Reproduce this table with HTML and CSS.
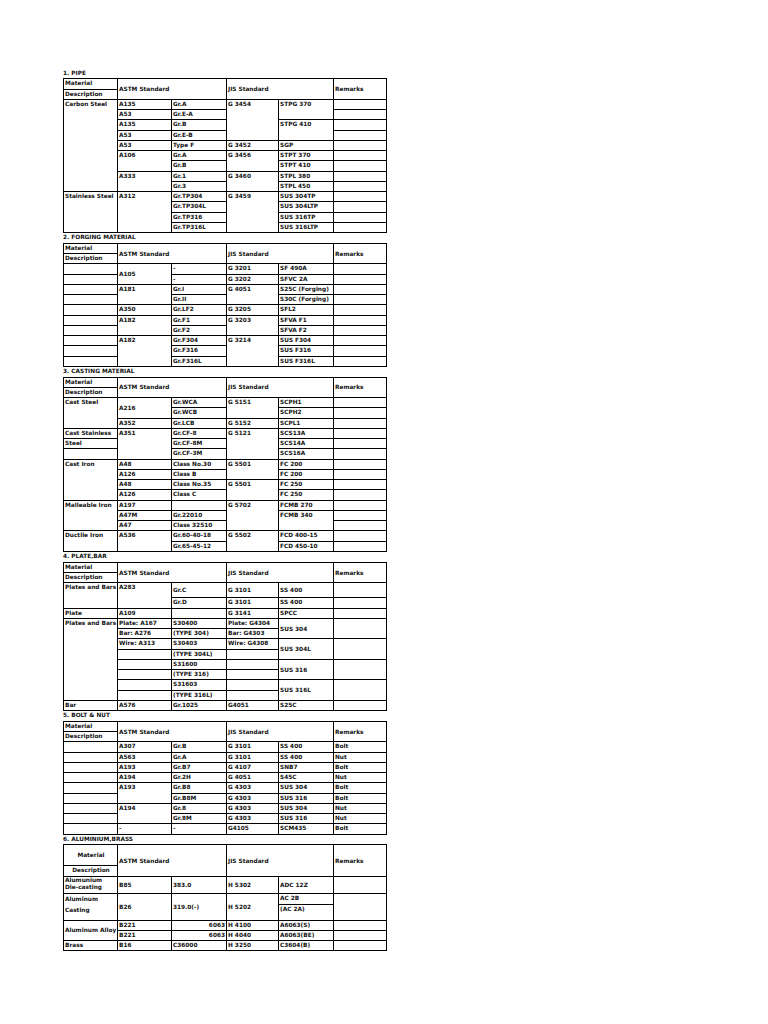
FILE: index.html
```html
<!DOCTYPE html>
<html>
<head>
<meta charset="utf-8">
<title>Material Standards</title>
<link rel="stylesheet" href="styles.css">
</head>
<body>
<div class="sheet">

<div class="sec">1. PIPE</div>
<table class="grid">
<colgroup><col class="w1"><col class="w2"><col class="w3"><col class="w4"><col class="w5"><col class="w6"></colgroup>
<tr class="hr"><td>Material</td><td rowspan="2" colspan="2" class="mid">ASTM Standard</td><td rowspan="2" colspan="2" class="mid">JIS Standard</td><td rowspan="2" class="mid">Remarks</td></tr>
<tr class="hr"><td>Description</td></tr>
<tr><td rowspan="9">Carbon Steel</td><td>A135</td><td>Gr.A</td><td rowspan="4">G 3454</td><td rowspan="2">STPG 370</td><td></td></tr>
<tr><td>A53</td><td>Gr.E-A</td><td></td></tr>
<tr><td>A135</td><td>Gr.B</td><td rowspan="2">STPG 410</td><td></td></tr>
<tr><td>A53</td><td>Gr.E-B</td><td></td></tr>
<tr><td>A53</td><td>Type F</td><td>G 3452</td><td>SGP</td><td></td></tr>
<tr><td rowspan="2">A106</td><td>Gr.A</td><td rowspan="2">G 3456</td><td>STPT 370</td><td></td></tr>
<tr><td>Gr.B</td><td>STPT 410</td><td></td></tr>
<tr><td rowspan="2">A333</td><td>Gr.1</td><td rowspan="2">G 3460</td><td>STPL 380</td><td></td></tr>
<tr><td>Gr.3</td><td>STPL 450</td><td></td></tr>
<tr><td rowspan="4">Stainless Steel</td><td rowspan="4">A312</td><td>Gr.TP304</td><td rowspan="4">G 3459</td><td>SUS 304TP</td><td></td></tr>
<tr><td>Gr.TP304L</td><td>SUS 304LTP</td><td></td></tr>
<tr><td>Gr.TP316</td><td>SUS 316TP</td><td></td></tr>
<tr><td>Gr.TP316L</td><td>SUS 316LTP</td><td></td></tr>
</table>

<div class="sec">2. FORGING MATERIAL</div>
<table class="grid">
<colgroup><col class="w1"><col class="w2"><col class="w3"><col class="w4"><col class="w5"><col class="w6"></colgroup>
<tr class="hr"><td>Material</td><td rowspan="2" colspan="2" class="mid">ASTM Standard</td><td rowspan="2" colspan="2" class="mid">JIS Standard</td><td rowspan="2" class="mid">Remarks</td></tr>
<tr class="hr"><td>Description</td></tr>
<tr><td></td><td rowspan="2" class="mid">A105</td><td>-</td><td>G 3201</td><td>SF 490A</td><td></td></tr>
<tr><td></td><td>-</td><td>G 3202</td><td>SFVC 2A</td><td></td></tr>
<tr><td></td><td rowspan="2">A181</td><td>Gr.I</td><td rowspan="2">G 4051</td><td>S25C (Forging)</td><td></td></tr>
<tr><td></td><td>Gr.II</td><td>S30C (Forging)</td><td></td></tr>
<tr><td></td><td>A350</td><td>Gr.LF2</td><td>G 3205</td><td>SFL2</td><td></td></tr>
<tr><td></td><td rowspan="2">A182</td><td>Gr.F1</td><td rowspan="2">G 3203</td><td>SFVA F1</td><td></td></tr>
<tr><td></td><td>Gr.F2</td><td>SFVA F2</td><td></td></tr>
<tr><td></td><td rowspan="3">A182</td><td>Gr.F304</td><td rowspan="3">G 3214</td><td>SUS F304</td><td></td></tr>
<tr><td></td><td>Gr.F316</td><td>SUS F316</td><td></td></tr>
<tr><td></td><td>Gr.F316L</td><td>SUS F316L</td><td></td></tr>
</table>

<div class="sec">3. CASTING MATERIAL</div>
<table class="grid">
<colgroup><col class="w1"><col class="w2"><col class="w3"><col class="w4"><col class="w5"><col class="w6"></colgroup>
<tr class="hr"><td>Material</td><td rowspan="2" colspan="2" class="mid">ASTM Standard</td><td rowspan="2" colspan="2" class="mid">JIS Standard</td><td rowspan="2" class="mid">Remarks</td></tr>
<tr class="hr"><td>Description</td></tr>
<tr><td rowspan="3">Cast Steel</td><td rowspan="2" class="mid">A216</td><td>Gr.WCA</td><td rowspan="2">G 5151</td><td>SCPH1</td><td></td></tr>
<tr><td>Gr.WCB</td><td>SCPH2</td><td></td></tr>
<tr><td>A352</td><td>Gr.LCB</td><td>G 5152</td><td>SCPL1</td><td></td></tr>
<tr><td>Cast Stainless</td><td rowspan="3">A351</td><td>Gr.CF-8</td><td rowspan="3">G 5121</td><td>SCS13A</td><td></td></tr>
<tr><td>Steel</td><td>Gr.CF-8M</td><td>SCS14A</td><td></td></tr>
<tr><td></td><td>Gr.CF-3M</td><td>SCS16A</td><td></td></tr>
<tr><td rowspan="4">Cast Iron</td><td>A48</td><td>Class No.30</td><td rowspan="2">G 5501</td><td>FC 200</td><td></td></tr>
<tr><td>A126</td><td>Class B</td><td>FC 200</td><td></td></tr>
<tr><td>A48</td><td>Class No.35</td><td rowspan="2">G 5501</td><td>FC 250</td><td></td></tr>
<tr><td>A126</td><td>Class C</td><td>FC 250</td><td></td></tr>
<tr><td rowspan="3">Malleable Iron</td><td>A197</td><td></td><td rowspan="3">G 5702</td><td>FCMB 270</td><td></td></tr>
<tr><td>A47M</td><td>Gr.22010</td><td rowspan="2">FCMB 340</td><td></td></tr>
<tr><td>A47</td><td>Class 32510</td><td></td></tr>
<tr><td rowspan="2">Ductile Iron</td><td rowspan="2">A536</td><td>Gr.60-40-18</td><td rowspan="2">G 5502</td><td>FCD 400-15</td><td></td></tr>
<tr><td>Gr.65-45-12</td><td>FCD 450-10</td><td></td></tr>
</table>

<div class="sec">4. PLATE,BAR</div>
<table class="grid">
<colgroup><col class="w1"><col class="w2"><col class="w3"><col class="w4"><col class="w5"><col class="w6"></colgroup>
<tr class="hr"><td>Material</td><td rowspan="2" colspan="2" class="mid">ASTM Standard</td><td rowspan="2" colspan="2" class="mid">JIS Standard</td><td rowspan="2" class="mid">Remarks</td></tr>
<tr class="hr"><td>Description</td></tr>
<tr class="tall"><td rowspan="2">Plates and Bars</td><td rowspan="2">A283</td><td class="mid">Gr.C</td><td class="mid">G 3101</td><td class="mid">SS 400</td><td></td></tr>
<tr><td>Gr.D</td><td>G 3101</td><td>SS 400</td><td></td></tr>
<tr><td>Plate</td><td>A109</td><td></td><td>G 3141</td><td>SPCC</td><td></td></tr>
<tr><td rowspan="8">Plates and Bars</td><td>Plate: A167</td><td>S30400</td><td>Plate: G4304</td><td rowspan="2" class="mid">SUS 304</td><td rowspan="2"></td></tr>
<tr><td>Bar: A276</td><td>(TYPE 304)</td><td>Bar: G4303</td></tr>
<tr><td>Wire: A313</td><td>S30403</td><td>Wire: G4308</td><td rowspan="2" class="mid">SUS 304L</td><td rowspan="2"></td></tr>
<tr><td></td><td>(TYPE 304L)</td><td></td></tr>
<tr><td></td><td>S31600</td><td></td><td rowspan="2" class="mid">SUS 316</td><td rowspan="2"></td></tr>
<tr><td></td><td>(TYPE 316)</td><td></td></tr>
<tr><td></td><td>S31603</td><td></td><td rowspan="2" class="mid">SUS 316L</td><td rowspan="2"></td></tr>
<tr><td></td><td>(TYPE 316L)</td><td></td></tr>
<tr><td>Bar</td><td>A576</td><td>Gr.1025</td><td>G4051</td><td>S25C</td><td></td></tr>
</table>

<div class="sec">5. BOLT &amp; NUT</div>
<table class="grid">
<colgroup><col class="w1"><col class="w2"><col class="w3"><col class="w4"><col class="w5"><col class="w6"></colgroup>
<tr class="hr"><td>Material</td><td rowspan="2" colspan="2" class="mid">ASTM Standard</td><td rowspan="2" colspan="2" class="mid">JIS Standard</td><td rowspan="2" class="mid">Remarks</td></tr>
<tr class="hr"><td>Description</td></tr>
<tr><td></td><td>A307</td><td>Gr.B</td><td>G 3101</td><td>SS 400</td><td>Bolt</td></tr>
<tr><td></td><td>A563</td><td>Gr.A</td><td>G 3101</td><td>SS 400</td><td>Nut</td></tr>
<tr><td></td><td>A193</td><td>Gr.B7</td><td>G 4107</td><td>SNB7</td><td>Bolt</td></tr>
<tr><td></td><td>A194</td><td>Gr.2H</td><td>G 4051</td><td>S45C</td><td>Nut</td></tr>
<tr><td></td><td rowspan="2">A193</td><td>Gr.B8</td><td>G 4303</td><td>SUS 304</td><td>Bolt</td></tr>
<tr><td></td><td>Gr.B8M</td><td>G 4303</td><td>SUS 316</td><td>Bolt</td></tr>
<tr><td></td><td rowspan="2">A194</td><td>Gr.8</td><td>G 4303</td><td>SUS 304</td><td>Nut</td></tr>
<tr><td></td><td>Gr.8M</td><td>G 4303</td><td>SUS 316</td><td>Nut</td></tr>
<tr><td></td><td>-</td><td>-</td><td>G4105</td><td>SCM435</td><td>Bolt</td></tr>
</table>

<div class="sec">6. ALUMINIUM,BRASS</div>
<table class="grid">
<colgroup><col class="w1"><col class="w2"><col class="w3"><col class="w4"><col class="w5"><col class="w6"></colgroup>
<tr class="h6a"><td class="ctr mid">Material</td><td rowspan="2" colspan="2" class="mid">ASTM Standard</td><td rowspan="2" colspan="2" class="mid">JIS Standard</td><td rowspan="2" class="mid">Remarks</td></tr>
<tr class="hr"><td class="ctr">Description</td></tr>
<tr class="r17"><td class="two">Alumunium<br>Die-casting</td><td class="mid">B85</td><td class="mid">383.0</td><td class="mid">H 5302</td><td class="mid">ADC 12Z</td><td></td></tr>
<tr class="r11"><td rowspan="2" class="cast">Aluminum<br>Casting</td><td rowspan="2" class="mid">B26</td><td rowspan="2" class="mid">319.0(-)</td><td rowspan="2" class="mid">H 5202</td><td>AC 2B</td><td rowspan="2"></td></tr>
<tr class="r15"><td>(AC 2A)</td></tr>
<tr><td rowspan="2" class="mid">Aluminum Alloy</td><td>B221</td><td class="num">6063</td><td>H 4100</td><td>A6063(S)</td><td></td></tr>
<tr><td>B221</td><td class="num">6063</td><td>H 4040</td><td>A6063(BE)</td><td></td></tr>
<tr><td>Brass</td><td>B16</td><td>C36000</td><td>H 3250</td><td>C3604(B)</td><td></td></tr>
</table>

</div>
</body>
</html>
```

FILE: styles.css
```css
html, body {
  margin: 0;
  padding: 0;
  background: #ffffff;
}

body {
  font-family: "DejaVu Sans", Verdana, sans-serif;
  font-weight: bold;
  font-size: 5.8px;
  color: #111111;
}

.sheet {
  width: 324px;
  margin: 68.6px 0 0 63px;
}

.sec {
  height: 9.8px;
  line-height: 8.6px;
  white-space: nowrap;
}

.grid {
  border-collapse: collapse;
  table-layout: fixed;
  width: 323px;
}

.w1 { width: 54px; }
.w2 { width: 54px; }
.w3 { width: 55px; }
.w4 { width: 52px; }
.w5 { width: 55px; }
.w6 { width: 53px; }

.grid tr {
  height: 10.25px;
}

.grid td {
  border: 1px solid #000;
  padding: 0 0 0 1px;
  line-height: 8px;
  vertical-align: top;
  white-space: nowrap;
  overflow: hidden;
}

.grid td.mid {
  vertical-align: middle;
}

.grid td.ctr {
  text-align: center;
}

.grid td.num {
  text-align: right;
  padding: 0 1px 0 0;
}

.grid td.two {
  white-space: normal;
  line-height: 7px;
}

.grid td.cast {
  white-space: normal;
  line-height: 11.5px;
}

.grid tr.tall {
  height: 15px;
}

.grid tr.h6a {
  height: 21px;
}

.grid tr.r17 {
  height: 17px;
}

.grid tr.r11 {
  height: 11.5px;
}

.grid tr.r15 {
  height: 15.5px;
}
```
